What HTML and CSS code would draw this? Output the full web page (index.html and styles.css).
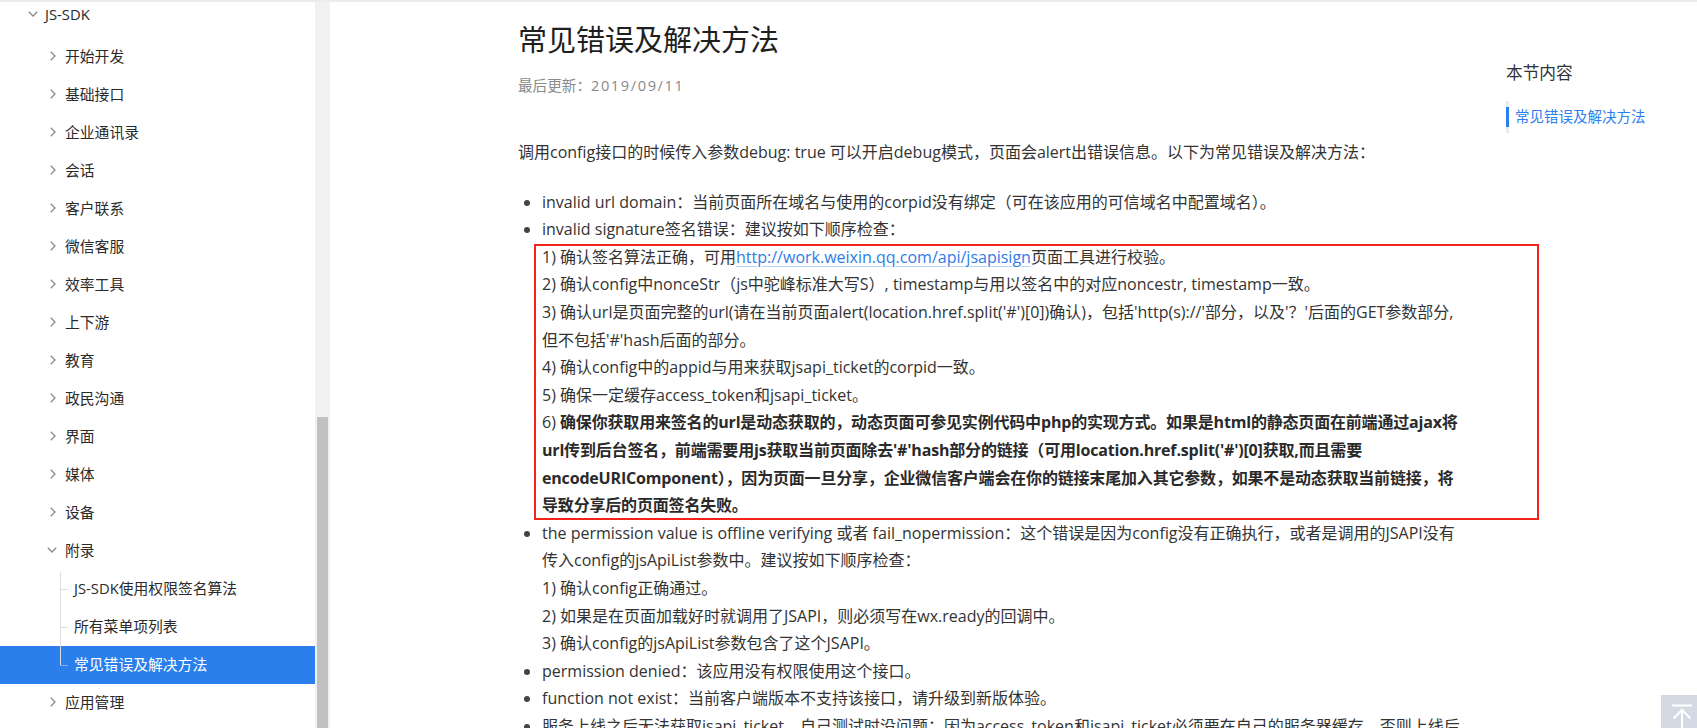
FILE: index.html
```html
<!DOCTYPE html>
<html lang="zh-CN">
<head>
<meta charset="utf-8">
<title>常见错误及解决方法</title>
<link rel="stylesheet" href="styles.css">
</head>
<body>
<div class="topline"></div>
<div class="layout">
  <aside class="sidebar">
    <nav class="nav">
      <div class="row lvl1"><svg class="chev-down" width="10" height="6" viewBox="0 0 10 6"><polyline points="0.8,0.8 5,5 9.2,0.8"/></svg>JS-SDK</div>
      <div class="group">
        <div class="row lvl2"><svg class="chev-right" width="6" height="10" viewBox="0 0 6 10"><polyline points="0.8,0.8 5,5 0.8,9.2"/></svg>开始开发</div>
        <div class="row lvl2"><svg class="chev-right" width="6" height="10" viewBox="0 0 6 10"><polyline points="0.8,0.8 5,5 0.8,9.2"/></svg>基础接口</div>
        <div class="row lvl2"><svg class="chev-right" width="6" height="10" viewBox="0 0 6 10"><polyline points="0.8,0.8 5,5 0.8,9.2"/></svg>企业通讯录</div>
        <div class="row lvl2"><svg class="chev-right" width="6" height="10" viewBox="0 0 6 10"><polyline points="0.8,0.8 5,5 0.8,9.2"/></svg>会话</div>
        <div class="row lvl2"><svg class="chev-right" width="6" height="10" viewBox="0 0 6 10"><polyline points="0.8,0.8 5,5 0.8,9.2"/></svg>客户联系</div>
        <div class="row lvl2"><svg class="chev-right" width="6" height="10" viewBox="0 0 6 10"><polyline points="0.8,0.8 5,5 0.8,9.2"/></svg>微信客服</div>
        <div class="row lvl2"><svg class="chev-right" width="6" height="10" viewBox="0 0 6 10"><polyline points="0.8,0.8 5,5 0.8,9.2"/></svg>效率工具</div>
        <div class="row lvl2"><svg class="chev-right" width="6" height="10" viewBox="0 0 6 10"><polyline points="0.8,0.8 5,5 0.8,9.2"/></svg>上下游</div>
        <div class="row lvl2"><svg class="chev-right" width="6" height="10" viewBox="0 0 6 10"><polyline points="0.8,0.8 5,5 0.8,9.2"/></svg>教育</div>
        <div class="row lvl2"><svg class="chev-right" width="6" height="10" viewBox="0 0 6 10"><polyline points="0.8,0.8 5,5 0.8,9.2"/></svg>政民沟通</div>
        <div class="row lvl2"><svg class="chev-right" width="6" height="10" viewBox="0 0 6 10"><polyline points="0.8,0.8 5,5 0.8,9.2"/></svg>界面</div>
        <div class="row lvl2"><svg class="chev-right" width="6" height="10" viewBox="0 0 6 10"><polyline points="0.8,0.8 5,5 0.8,9.2"/></svg>媒体</div>
        <div class="row lvl2"><svg class="chev-right" width="6" height="10" viewBox="0 0 6 10"><polyline points="0.8,0.8 5,5 0.8,9.2"/></svg>设备</div>
        <div class="row lvl2 open"><svg class="chev-down" width="10" height="6" viewBox="0 0 10 6"><polyline points="0.8,0.8 5,5 9.2,0.8"/></svg>附录</div>
        <div class="sub">
          <div class="row lvl3">JS-SDK使用权限签名算法</div>
          <div class="row lvl3">所有菜单项列表</div>
          <div class="row lvl3 active">常见错误及解决方法</div>
        </div>
        <div class="row lvl2"><svg class="chev-right" width="6" height="10" viewBox="0 0 6 10"><polyline points="0.8,0.8 5,5 0.8,9.2"/></svg>应用管理</div>
      </div>
    </nav>
    <div class="scrollbar"><div class="thumb"></div></div>
  </aside>

  <main class="main">
    <article class="doc">
      <h1 class="title">常见错误及解决方法</h1>
      <div class="date">最后更新：<span class="date-num">2019/09/11</span></div>
      <p class="intro">调用config接口的时候传入参数debug: true 可以开启debug模式，页面会alert出错误信息。以下为常见错误及解决方法：</p>
      <ul class="list">
        <li>invalid url domain：当前页面所在域名与使用的corpid没有绑定（可在该应用的可信域名中配置域名）。</li>
        <li>invalid signature签名错误：建议按如下顺序检查：
          <div class="marked">
            1) 确认签名算法正确，可用<a class="link" href="#">http://work.weixin.qq.com/api/jsapisign</a>页面工具进行校验。<br>
            2) 确认config中nonceStr（js中驼峰标准大写S）, timestamp与用以签名中的对应noncestr, timestamp一致。<br>
            3) 确认url是页面完整的url(请在当前页面alert(location.href.split('#')[0])确认)，包括'http(s)://'部分，以及'？'后面的GET参数部分,<br>
            但不包括'#'hash后面的部分。<br>
            4) 确认config中的appid与用来获取jsapi_ticket的corpid一致。<br>
            5) 确保一定缓存access_token和jsapi_ticket。<br>
            6) <b>确保你获取用来签名的url是动态获取的，动态页面可参见实例代码中php的实现方式。如果是html的静态页面在前端通过ajax将<br>
            url传到后台签名，前端需要用js获取当前页面除去'#'hash部分的链接（可用location.href.split('#')[0]获取,而且需要<br>
            encodeURIComponent），因为页面一旦分享，企业微信客户端会在你的链接末尾加入其它参数，如果不是动态获取当前链接，将<br>
            导致分享后的页面签名失败。</b>
          </div>
        </li>
        <li>the permission value is offline verifying 或者 fail_nopermission：这个错误是因为config没有正确执行，或者是调用的JSAPI没有<br>
          传入config的jsApiList参数中。建议按如下顺序检查：<br>
          1) 确认config正确通过。<br>
          2) 如果是在页面加载好时就调用了JSAPI，则必须写在wx.ready的回调中。<br>
          3) 确认config的jsApiList参数包含了这个JSAPI。</li>
        <li>permission denied：该应用没有权限使用这个接口。</li>
        <li>function not exist：当前客户端版本不支持该接口，请升级到新版体验。</li>
        <li>服务上线之后无法获取jsapi_ticket，自己测试时没问题：因为access_token和jsapi_ticket必须要在自己的服务器缓存，否则上线后<br>
          会触发频率限制。请确保一定对token和ticket做缓存以减少2次服务器请求，不仅可以避免触发频率限制，还加快你的服务速度。</li>
      </ul>
    </article>

    <div class="toc">
      <div class="toc-title">本节内容</div>
      <div class="toc-track">
        <a class="toc-link" href="#">常见错误及解决方法</a>
      </div>
    </div>
  </main>
</div>
<a class="backtop" href="#"><svg width="40" height="40" viewBox="0 0 40 40"><line x1="11" y1="10.5" x2="31" y2="10.5"/><polyline points="12.5,23.5 21,15 29.5,23.5"/><line x1="21" y1="15" x2="21" y2="38"/></svg></a>
</body>
</html>
```

FILE: styles.css
```css
html, body {
  margin: 0;
  padding: 0;
  background: #ffffff;
}

body {
  height: 728px;
  overflow: hidden;
  font-family: "Open Sans", "Noto Sans CJK SC", sans-serif;
  color: #333333;
}

.topline {
  height: 2px;
  background: #ececec;
}

.layout {
  display: flex;
  height: 726px;
  overflow: hidden;
}

/* ---------- sidebar ---------- */
.sidebar {
  display: flex;
  flex: 0 0 330px;
  height: 726px;
  overflow: hidden;
}

.nav {
  width: 315px;
  font-size: 14.8px;
  color: #2a2a2a;
}

.row {
  box-sizing: border-box;
  display: flex;
  align-items: center;
  height: 38px;
  padding-bottom: 3px;
  white-space: nowrap;
}

.lvl1 {
  margin-top: -6px;
  padding-left: 28px;
}

.lvl1 .chev-down {
  margin-right: 7px;
}

.group {
  margin-top: 4px;
}

.lvl2 {
  padding-left: 50px;
}

.lvl2 .chev-right {
  margin-right: 9px;
}

.lvl2.open {
  padding-left: 47px;
}

.lvl2.open .chev-down {
  margin-right: 8px;
}

.chev-right polyline,
.chev-down polyline {
  fill: none;
  stroke: #8a8a8a;
  stroke-width: 1.3;
}

.sub {
  position: relative;
}

.sub::before {
  content: "";
  position: absolute;
  left: 60px;
  top: 2px;
  bottom: 19px;
  width: 1px;
  background: #dddddd;
  z-index: 1;
}

.lvl3 {
  position: relative;
  padding-left: 74px;
}

.lvl3::before {
  content: "";
  position: absolute;
  left: 60px;
  top: 19px;
  width: 8px;
  height: 1px;
  background: #dddddd;
  z-index: 1;
}

.lvl3.active {
  background: #2b7fec;
  color: #ffffff;
}

.lvl3.active::before {
  background: #7fb0f2;
}

.scrollbar {
  width: 15px;
  height: 726px;
  background: #f1f1f1;
}

.thumb {
  margin: 415px 0 0 2px;
  width: 11px;
  height: 320px;
  background: #c1c1c1;
}

/* ---------- main ---------- */
.main {
  flex: 1;
  display: flex;
  min-width: 0;
}

.doc {
  flex: 0 0 988px;
  min-width: 0;
  margin-left: 188px;
  font-size: 16px;
  color: #333333;
}

.title {
  margin: 18px 0 0;
  font-size: 29px;
  font-weight: 400;
  line-height: 40px;
  color: #1f1f1f;
}

.date {
  margin-top: 15px;
  font-size: 14.6px;
  line-height: 20px;
  color: #8a8a8a;
}

.date-num {
  letter-spacing: 1.6px;
}

.intro {
  margin: 44px 0 0;
  line-height: 27.6px;
  white-space: nowrap;
}

.list {
  margin: 22px 0 0;
  padding-left: 24px;
  line-height: 27.6px;
  white-space: nowrap;
}

.list li::marker {
  color: #444444;
}

.marked {
  box-sizing: border-box;
  width: 1005px;
  margin-left: -8px;
  padding-left: 8px;
  outline: 2px solid #f3231c;
  outline-offset: -2px;
}

.marked b {
  font-weight: 700;
  color: #2a2a2a;
  letter-spacing: -0.18px;
}

.link {
  color: #2e7ce8;
  text-decoration: underline;
  text-decoration-color: #b6d3f8;
  text-underline-offset: 3px;
}

/* ---------- toc ---------- */
.toc {
  flex: 0 0 180px;
  margin-top: 59px;
}

.toc-title {
  font-size: 16.7px;
  line-height: 24px;
  color: #333333;
}

.toc-track {
  margin-top: 16px;
  border-left: 3px solid #ebebeb;
  padding: 6px 0;
}

.toc-link {
  display: block;
  margin-left: -3px;
  padding-left: 6px;
  border-left: 3px solid #2b7fec;
  font-size: 14.5px;
  line-height: 20px;
  color: #2b7fec;
  text-decoration: none;
  white-space: nowrap;
}

/* ---------- back to top ---------- */
.backtop {
  position: fixed;
  left: 1661px;
  top: 695px;
  width: 40px;
  height: 40px;
  background: #d3dae4;
}

.backtop svg {
  display: block;
}

.backtop line,
.backtop polyline {
  fill: none;
  stroke: #ffffff;
  stroke-width: 2;
}
```
